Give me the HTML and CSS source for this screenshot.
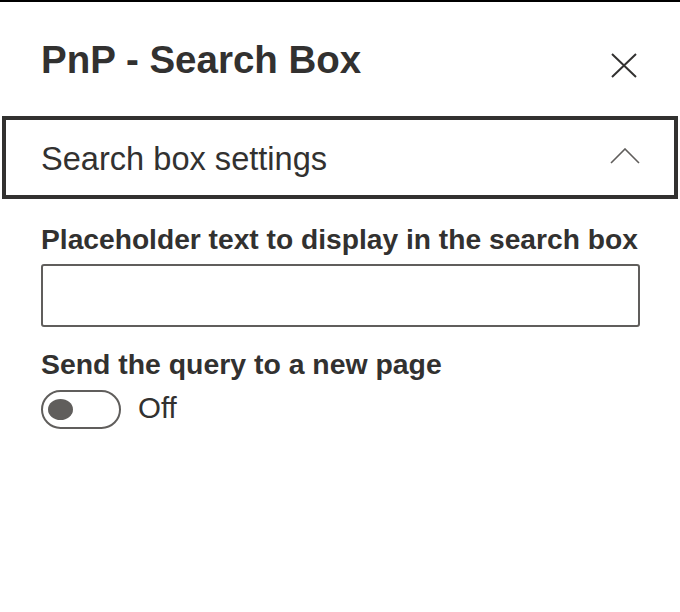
FILE: index.html
```html
<!DOCTYPE html>
<html lang="en">
<head>
<meta charset="utf-8">
<title>PnP - Search Box</title>
<link rel="stylesheet" href="styles.css">
</head>
<body>
<div class="panel">
  <header class="panel-header">
    <h1 class="panel-title">PnP - Search Box</h1>
    <button class="close-btn" aria-label="Close">
      <svg width="26" height="25" viewBox="0 0 26 25"><path d="M1 1 L25 24 M25 1 L1 24" stroke="#323130" stroke-width="2" fill="none"/></svg>
    </button>
  </header>
  <div class="group-header">
    <span class="group-title">Search box settings</span>
    <svg class="chevron" width="30" height="16" viewBox="0 0 30 16"><path d="M1 15 L15 1 L29 15" stroke="#605e5c" stroke-width="1.6" fill="none"/></svg>
  </div>
  <div class="group-body">
    <label class="field-label">Placeholder text to display in the search box</label>
    <div class="text-input"></div>
    <label class="field-label second">Send the query to a new page</label>
    <div class="toggle-row">
      <div class="toggle"><span class="knob"></span></div>
      <span class="toggle-text">Off</span>
    </div>
  </div>
</div>
</body>
</html>
```

FILE: styles.css
```css
html, body {
  margin: 0;
  padding: 0;
  background: #ffffff;
}
body {
  font-family: "Liberation Sans", Arial, sans-serif;
  color: #323130;
}
.panel {
  border-top: 2px solid #000000;
  width: 680px;
  height: 610px;
}
.panel-header {
  display: flex;
  align-items: flex-start;
  justify-content: space-between;
  padding: 34px 43px 0 41px;
}
.panel-title {
  margin: 0;
  font-size: 38.5px;
  line-height: 48px;
  font-weight: bold;
  color: #323130;
}
.close-btn {
  border: 0;
  background: none;
  padding: 0;
  margin-top: 17px;
  width: 26px;
  height: 25px;
  display: block;
}
.close-btn svg { display: block; }
.group-header {
  margin: 32px 2px 0 2px;
  border: 4px solid #323130;
  height: 75px;
  display: flex;
  align-items: center;
  justify-content: space-between;
  padding: 0 34px 0 35px;
  box-sizing: content-box;
}
.group-title {
  font-size: 32.6px;
  line-height: 73px;
  padding-top: 2px;
  color: #323130;
}
.chevron {
  display: block;
  margin-top: -4px;
}
.group-body {
  padding: 22px 40px 0 41px;
}
.field-label {
  display: block;
  font-size: 28.2px;
  line-height: 36px;
  font-weight: bold;
  color: #323130;
}
.field-label.second {
  margin-top: 19px;
  font-size: 28.4px;
}
.text-input {
  margin-top: 7px;
  height: 59px;
  border: 2px solid #605e5c;
  border-radius: 3px;
}
.toggle-row {
  display: flex;
  align-items: center;
  margin-top: 8px;
}
.toggle {
  width: 71px;
  height: 35px;
  border: 2px solid #605e5c;
  border-radius: 20px;
  display: flex;
  align-items: center;
  padding-left: 5px;
  box-sizing: content-box;
}
.knob {
  width: 25px;
  height: 21px;
  border-radius: 50%;
  background: #605e5c;
  display: block;
}
.toggle-text {
  margin-left: 17px;
  font-size: 29.5px;
  line-height: 36px;
  margin-top: -3px;
  color: #323130;
}
```
